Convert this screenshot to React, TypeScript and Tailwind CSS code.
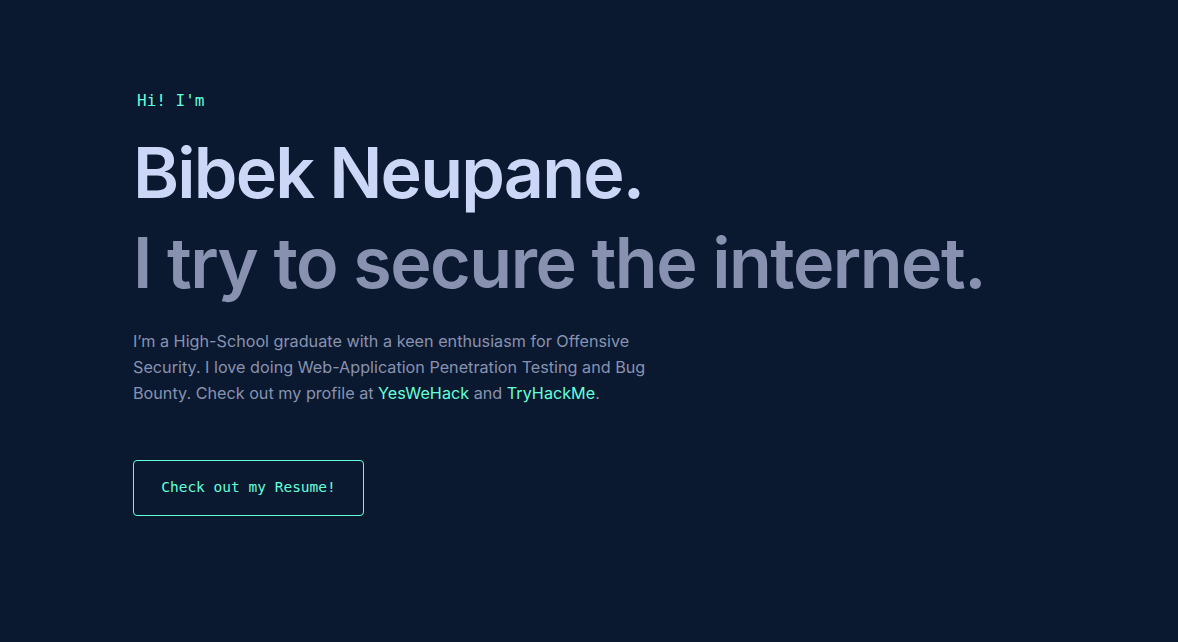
export default function App() {
  return (
    <div className="min-h-[642px] bg-[#0a192f] pl-[133px] pt-[90px]" style={{ fontFamily: "Inter, 'Liberation Sans', sans-serif" }}>
      <section className="flex flex-col items-start">
        <h1 className="ml-1 text-[16px] leading-[22px] text-[#64ffda]" style={{ fontFamily: "'DejaVu Sans Mono', monospace" }}>
          Hi! I'm
        </h1>
        <h2 className="mt-[18px] text-[70px] font-semibold leading-[86px] tracking-[-1.8px] text-[#ccd6f6]">Bibek Neupane.</h2>
        <h3 className="mt-[4px] text-[70px] font-semibold leading-[86px] tracking-[-1.5px] text-[#8892b0]">
          I try to secure the internet.
        </h3>
        <p className="mt-[22px] max-w-[540px] text-[16.2px] leading-[26px] text-[#8892b0]">
          I’m a High-School graduate with a keen enthusiasm for Offensive Security. I love doing Web-Application
          Penetration Testing and Bug Bounty. Check out my profile at{' '}
          <a href="#" className="text-[#64ffda]">YesWeHack</a> and{' '}
          <a href="#" className="text-[#64ffda]">TryHackMe</a>.
        </p>
        <a
          href="#"
          className="mt-[54px] flex h-[56px] w-[231px] items-center justify-center rounded-[4px] border border-[#64ffda] text-[14.5px] text-[#64ffda]"
          style={{ fontFamily: "'DejaVu Sans Mono', monospace" }}
        >
          Check out my Resume!
        </a>
      </section>
    </div>
  )
}
